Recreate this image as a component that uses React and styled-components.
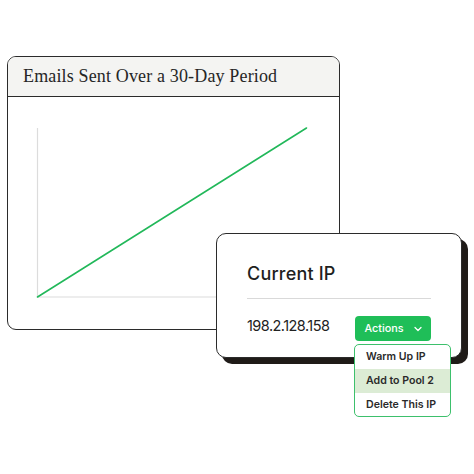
import React from 'react';
import styled, { createGlobalStyle } from 'styled-components';
import { ChevronDown } from 'lucide-react';

const GlobalStyle = createGlobalStyle`
    html, body {
        margin: 0;
        padding: 0;
        background: #ffffff;
    }
    * {
        box-sizing: border-box;
    }
`;

const Stage = styled.div`
    position: relative;
    width: 474px;
    height: 474px;
    overflow: hidden;
    background: #ffffff;
`;

// the two cards sit on a free canvas and overlap, like windows on a desktop
const ChartCard = styled.section`
    position: absolute;
    left: 7px;
    top: 56px;
    width: 333px;
    height: 274px;
    display: flex;
    flex-direction: column;
    border: 1.5px solid #2b2b2b;
    border-radius: 9px;
    background: #ffffff;
    overflow: hidden;
`;

const ChartHeader = styled.header`
    height: 40px;
    display: flex;
    align-items: center;
    padding: 0 15px;
    background: #f4f4f2;
    border-bottom: 1.5px solid #2b2b2b;
    font-family: "Liberation Serif", "Times New Roman", serif;
    font-size: 18px;
    color: #262626;
    letter-spacing: 0.15px;
`;

const ChartBody = styled.div`
    flex: 1;
    svg {
        display: block;
    }
`;

const IpCard = styled.section`
    position: absolute;
    left: 216px;
    top: 233px;
    width: 246px;
    height: 125px;
    padding: 29px 30px 0 30px;
    border: 1.5px solid #2b2b2b;
    border-radius: 10px;
    background: #ffffff;
    box-shadow: 6px 6px 0 0 #1f1b18;
    font-family: Inter, "Noto Sans", sans-serif;
    color: #1f1f1f;
`;

const IpTitle = styled.h2`
    margin: 0;
    font-size: 18px;
    font-weight: 500;
    line-height: 22px;
    letter-spacing: 0.2px;
`;

const Divider = styled.hr`
    margin: 13px 0 0 0;
    border: none;
    border-top: 1px solid #d9d9d9;
`;

const IpRow = styled.div`
    display: flex;
    justify-content: space-between;
    align-items: flex-start;
    margin-top: 17px;
`;

const IpAddress = styled.span`
    margin-top: 2px;
    font-size: 14.5px;
    line-height: 15px;
    letter-spacing: -0.55px;
    color: #222222;
`;

const ActionsWrap = styled.div`
    position: relative;
`;

const ActionsButton = styled.button`
    width: 76px;
    height: 25px;
    display: flex;
    align-items: center;
    justify-content: center;
    gap: 8px;
    padding: 0 0 0 2px;
    border: none;
    border-radius: 4px;
    background: #1fbe58;
    color: #ffffff;
    font-family: Inter, "Noto Sans", sans-serif;
    font-size: 10.8px;
    font-weight: 500;
    cursor: pointer;
`;

const Menu = styled.ul`
    position: absolute;
    top: 28px;
    left: -1px;
    width: 97px;
    margin: 0;
    padding: 0;
    list-style: none;
    background: #ffffff;
    border: 1.5px solid #3dc06c;
    border-radius: 5px;
    overflow: hidden;
    z-index: 2;
`;

const MenuItem = styled.li`
    height: ${props => props.tall ? 24 : 23.5}px;
    display: flex;
    align-items: center;
    padding-left: 11px;
    font-size: 10.6px;
    font-weight: 600;
    color: #2a2a2a;
    white-space: nowrap;
    background: ${props => props.active ? '#dcecd5' : 'transparent'};
`;

const menuItems = ['Warm Up IP', 'Add to Pool 2', 'Delete This IP'];

const Chart = () => (
    <svg width="330" height="231" viewBox="0 0 330 231">
        <line x1="29.5" y1="31" x2="29.5" y2="200" stroke="#dcdcdc" strokeWidth="1.2" />
        <line x1="29.5" y1="200" x2="300" y2="200" stroke="#dcdcdc" strokeWidth="1.2" />
        <line x1="29.5" y1="200" x2="298.5" y2="31" stroke="#22b85a" strokeWidth="1.6" strokeLinecap="round" />
    </svg>
);

export default function App() {
    return (
        <Stage>
            <GlobalStyle />
            <ChartCard>
                <ChartHeader>Emails Sent Over a 30-Day Period</ChartHeader>
                <ChartBody>
                    <Chart />
                </ChartBody>
            </ChartCard>
            <IpCard>
                <IpTitle>Current IP</IpTitle>
                <Divider />
                <IpRow>
                    <IpAddress>198.2.128.158</IpAddress>
                    <ActionsWrap>
                        <ActionsButton>
                            Actions <ChevronDown size={12} strokeWidth={2.6} />
                        </ActionsButton>
                        <Menu>
                            {menuItems.map((item, i) => (
                                <MenuItem key={item} active={i === 1} tall={i === 1}>{item}</MenuItem>
                            ))}
                        </Menu>
                    </ActionsWrap>
                </IpRow>
            </IpCard>
        </Stage>
    );
}
